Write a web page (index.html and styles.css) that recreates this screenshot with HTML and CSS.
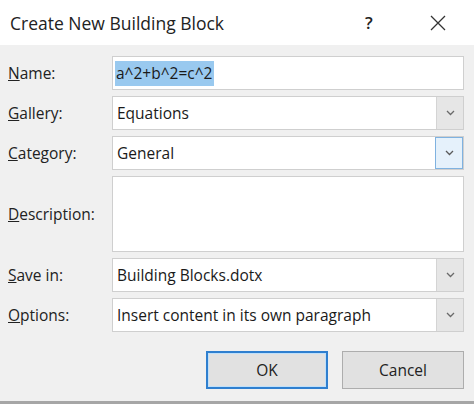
FILE: index.html
```html
<!DOCTYPE html>
<html lang="en-us">
<head>
    <meta charset="utf-8"/>
    <meta name="viewport" content="width=device-width, initial-scale=1"/>
    <link rel="stylesheet" href="styles.css">
</head>
<body>
    <div class="dialog">
        <div class="titlebar">
            <span class="title">Create New Building Block</span>
            <span class="help">?</span>
            <span class="close">
                <svg width="16" height="16" viewBox="0 0 16 16"><path d="M1 1 L15 15 M15 1 L1 15" stroke="#333" stroke-width="1.3" fill="none"/></svg>
            </span>
        </div>

        <div class="content">
            <div class="form">
                <label class="lbl"><u>N</u>ame:</label>
                <div class="field"><span class="sel">a^2+b^2=c^2</span></div>

                <label class="lbl"><u>G</u>allery:</label>
                <div class="field combo">
                    <span class="value">Equations</span>
                    <span class="drop"><svg width="9" height="6" viewBox="0 0 9 6"><path d="M1 1 L4.5 4.5 L8 1" stroke="#6a6a6a" stroke-width="1.3" fill="none"/></svg></span>
                </div>

                <label class="lbl"><u>C</u>ategory:</label>
                <div class="field combo">
                    <span class="value">General</span>
                    <span class="drop hot"><svg width="9" height="6" viewBox="0 0 9 6"><path d="M1 1 L4.5 4.5 L8 1" stroke="#5a5a5a" stroke-width="1.3" fill="none"/></svg></span>
                </div>

                <label class="lbl"><u>D</u>escription:</label>
                <div class="field"></div>

                <label class="lbl"><u>S</u>ave in:</label>
                <div class="field combo">
                    <span class="value">Building Blocks.dotx</span>
                    <span class="drop"><svg width="9" height="6" viewBox="0 0 9 6"><path d="M1 1 L4.5 4.5 L8 1" stroke="#6a6a6a" stroke-width="1.3" fill="none"/></svg></span>
                </div>

                <label class="lbl"><u>O</u>ptions:</label>
                <div class="field combo">
                    <span class="value">Insert content in its own paragraph</span>
                    <span class="drop"><svg width="9" height="6" viewBox="0 0 9 6"><path d="M1 1 L4.5 4.5 L8 1" stroke="#6a6a6a" stroke-width="1.3" fill="none"/></svg></span>
                </div>
            </div>

            <div class="buttons">
                <button type="button" class="btn default">OK</button>
                <button type="button" class="btn">Cancel</button>
            </div>
        </div>
        <div class="edge"></div>
    </div>
</body>
</html>
```

FILE: styles.css
```css
/* dialog de janela estilo windows */

body {
    margin: 0;
    font-family: "Open Sans", "Noto Sans", sans-serif;
    color: #1a1a1a;
}

.dialog {
    width: 474px;
    height: 404px;
    display: flex;
    flex-direction: column;
    background-color: #f0f0f0;
}

.titlebar {
    height: 45px;
    background-color: #fff;
    display: flex;
    align-items: center;
    padding-left: 10px;
}

.title {
    font-size: 17.5px;
    flex: 1;
    color: #222;
}

.help {
    font-size: 17px;
    font-weight: 600;
    width: 20px;
    margin-right: 45px;
    color: #222;
}

.close {
    width: 36px;
    display: flex;
    align-items: center;
    margin-right: 8px;
}

.content {
    flex: 1;
    padding: 11px 10px 0 8px;
}

.form {
    display: grid;
    grid-template-columns: 104px 352px;
    grid-template-rows: 34px 34px 34px 76px 34px 34px;
    row-gap: 6px;
}

.lbl {
    font-size: 15.5px;
    display: flex;
    align-items: center;
    color: #222;
}

.field {
    background-color: #fff;
    border: 1px solid #cfcfcf;
    display: flex;
    align-items: center;
    font-size: 15.5px;
    padding-left: 2px;
}

.sel {
    background-color: #99c9ef;
    padding: 1px 2px 2px 1px;
}

.combo .value {
    flex: 1;
    padding-left: 2px;
}

.drop {
    width: 26px;
    align-self: stretch;
    background-color: #e6e6e6;
    border-left: 1px solid #d4d4d4;
    display: flex;
    align-items: center;
    justify-content: center;
}

.drop.hot {
    background-color: #e5f1fb;
    border: 1px solid #7fb2e0;
}

.buttons {
    display: flex;
    justify-content: flex-end;
    gap: 14px;
    margin-top: 19px;
}

.btn {
    width: 122px;
    height: 38px;
    font-family: inherit;
    font-size: 15.5px;
    color: #222;
    background-color: #e1e1e1;
    border: 1px solid #adadad;
}

.btn.default {
    border: 2px solid #2f7fcf;
    box-shadow: inset 0 0 0 1px #bfe0fa;
}

.edge {
    height: 3px;
    background-color: #a6a6a6;
}
```
